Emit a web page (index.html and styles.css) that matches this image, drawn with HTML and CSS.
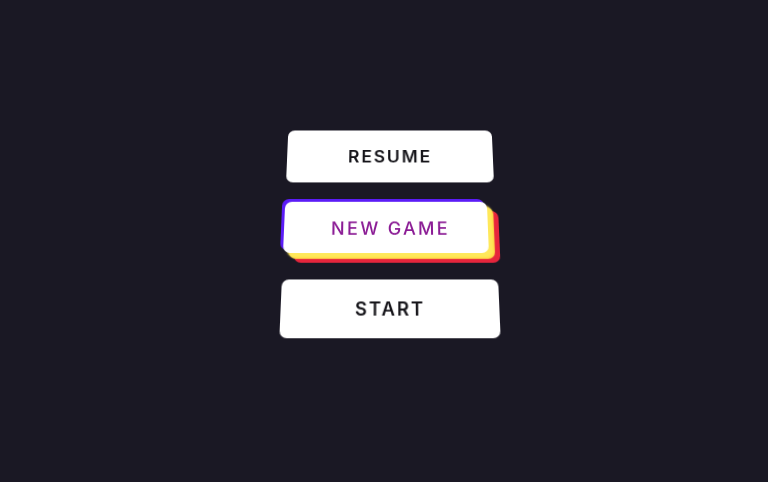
FILE: index.html
```html
<!DOCTYPE html>
<html>
<head>
<meta charset="utf-8">
<link rel="stylesheet" href="styles.css">
</head>
<body>
<div class="stage">
  <div class="menu">
    <button class="btn">RESUME</button>
    <button class="btn active">NEW GAME</button>
    <button class="btn">START</button>
  </div>
</div>
</body>
</html>
```
FILE: styles.css
```css
html, body {
  margin: 0;
  padding: 0;
  width: 768px;
  height: 482px;
  background: #1a1824;
  overflow: hidden;
}
.stage {
  display: flex;
  justify-content: center;
  padding-top: 121px;
  padding-left: 12px;
}
.menu {
  display: flex;
  flex-direction: column;
  align-items: center;
  gap: 22px;
  transform: perspective(800px) rotateX(18deg);
  transform-origin: 50% 50%;
}
.btn {
  width: 212px;
  height: 58px;
  border: none;
  border-radius: 7px;
  background: #ffffff;
  font-family: "Inter", "Liberation Sans", sans-serif;
  font-weight: 600;
  font-size: 18px;
  letter-spacing: 1.9px;
  color: #151419;
  padding: 0;
}
.btn.active {
  width: 204px;
  height: 54px;
  margin: 2px 0;
  padding: 3px 0 0 9px;
  color: #8a1a94;
  font-weight: 500;
  letter-spacing: 2.3px;
  transform: translate(-4px, -3px);
  box-shadow:
    -3px -3px 0 #5b1cf7,
    4px 4px 2px #ffe85a,
    6px 6px 1px #ffe04a,
    11px 10px 0 #e7253c;
}
```
